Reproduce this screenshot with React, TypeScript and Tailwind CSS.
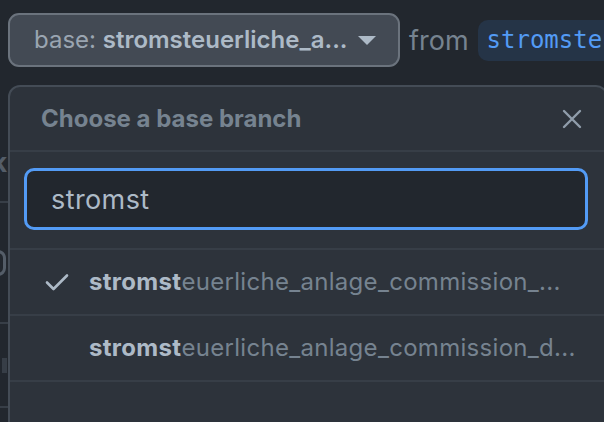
import React from 'react';

const sans = { fontFamily: 'Inter, "Noto Sans", "Liberation Sans", sans-serif' };

function Row({ rest, checked }: { rest: string; checked?: boolean }) {
    return (
        <div className="h-[66px] border-b-2 border-[#373e47] flex items-center">
            <div className="w-[79px] pl-[35px] shrink-0">
                {checked && (
                    <svg width="24" height="18" viewBox="0 0 24 18" fill="none" stroke="#adbac7" strokeWidth="2.6" strokeLinecap="round" strokeLinejoin="round">
                        <path d="M2 9.5 L8.5 16 L22 2.5" />
                    </svg>
                )}
            </div>
            <span className="text-[24px] tracking-[0.3px] leading-none whitespace-nowrap">
                <span className="font-bold text-[#adbac7]">stromst</span>
                <span className="text-[#768390]">{rest}</span>
            </span>
        </div>
    );
}

export default function App() {
    return (
        <div className="w-[604px] h-[422px] bg-[#22272e] relative overflow-hidden" style={sans}>
            {/* faint page content behind the menu */}
            <div className="absolute left-0 top-[150px] w-[8px] text-[26px] font-bold text-[#545d68] leading-none overflow-hidden">
                <span className="block -ml-[8px]">k</span>
            </div>
            <div className="absolute left-0 top-[201px] w-[8px] h-[2px] bg-[#373e47]" />
            <div className="absolute left-0 top-[322px] w-[8px] h-[2px] bg-[#373e47]" />
            <div className="absolute left-0 top-[406px] w-[8px] h-[2px] bg-[#373e47]" />
            <div className="absolute left-[2px] top-[358px] w-[5px] h-[15px] bg-[#373e47]" />
            <div className="absolute -left-[10px] top-[250px] w-[16px] h-[26px] rounded-full border-[3px] border-[#545d68]" />

            <div className="flex items-center pt-[13px] pl-[8px] w-max">
                <div className="w-[392px] shrink-0 h-[54px] rounded-[11px] border-2 border-[#6b737d] bg-[#434a54] flex items-center justify-between pl-[24px] pr-[22px]">
                    <span className="text-[24px] leading-none whitespace-nowrap">
                        <span className="text-[#9aa5b1]">base: </span>
                        <span className="font-semibold text-[#adbac7]">stromsteuerliche_a...</span>
                    </span>
                    <svg className="shrink-0" width="18" height="9" viewBox="0 0 18 9">
                        <path d="M0 0 H18 L9 9 Z" fill="#adbac7" />
                    </svg>
                </div>
                <span className="ml-[9px] text-[27px] text-[#768390] leading-none shrink-0">from</span>
                <div className="ml-[9px] h-[41px] rounded-[10px] bg-[#253447] pl-[9px] pr-[9px] flex items-center shrink-0">
                    <span className="text-[24px] text-[#539bf5] leading-none whitespace-nowrap" style={{ fontFamily: '"DejaVu Sans Mono", "Liberation Mono", monospace' }}>
                        stromsteuerliche
                    </span>
                </div>
            </div>

            <div className="absolute left-[8px] top-[85px] w-[600px] h-[360px] bg-[#2d333b] border-2 border-[#444c56] rounded-[12px]">
                <div className="h-[65px] border-b-2 border-[#373e47] flex items-center pl-[31px] pr-[24px]">
                    <span className="text-[24px] font-bold text-[#768390] leading-none">Choose a base branch</span>
                    <svg className="ml-auto" width="20" height="20" viewBox="0 0 20 20" stroke="#909dab" strokeWidth="2.4" strokeLinecap="round">
                        <path d="M2 2 L18 18 M18 2 L2 18" />
                    </svg>
                </div>
                <div className="h-[98px] border-b-2 border-[#373e47] pt-[16px] pl-[14px] pr-[18px]">
                    <div className="h-[62px] rounded-[10px] border-[3px] border-[#539bf5] bg-[#22272e] flex items-center pl-[24px]">
                        <span className="text-[27px] tracking-[0.4px] text-[#adbac7] leading-none">stromst</span>
                    </div>
                </div>
                <Row rest="euerliche_anlage_commission_..." checked />
                <Row rest="euerliche_anlage_commission_d..." />
            </div>
        </div>
    );
}
